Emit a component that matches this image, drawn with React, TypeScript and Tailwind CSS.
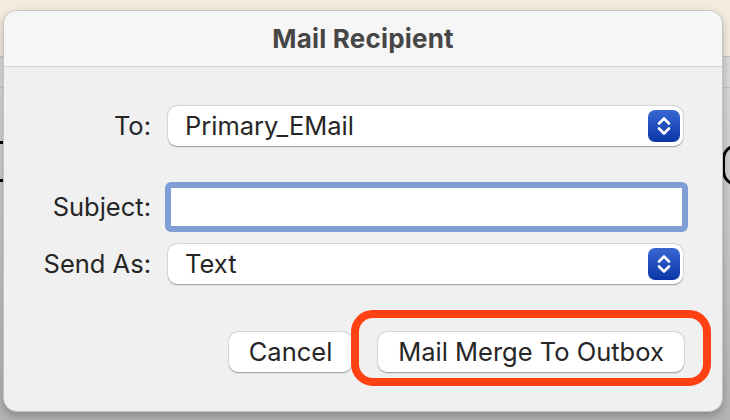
import React from "react";

function Stepper() {
  return (
    <div className="flex h-[32px] w-[32px] items-center justify-center rounded-[7px] bg-gradient-to-b from-[#3868d4] to-[#0a35a8]">
      <svg width="18" height="24" viewBox="0 0 18 24" fill="none">
        <path d="M4 9.5 L9 4.5 L14 9.5" stroke="white" strokeWidth="2.6" strokeLinecap="round" strokeLinejoin="round" />
        <path d="M4 14.5 L9 19.5 L14 14.5" stroke="white" strokeWidth="2.6" strokeLinecap="round" strokeLinejoin="round" />
      </svg>
    </div>
  );
}

function Select({ value }: { value: string }) {
  return (
    <div className="flex h-[40px] w-[515px] items-center justify-between rounded-[9px] bg-white pl-[17px] pr-[3px] shadow-[0_0.5px_1.5px_rgba(0,0,0,0.35),0_0_0_0.5px_rgba(0,0,0,0.08)]">
      <span>{value}</span>
      <Stepper />
    </div>
  );
}

export default function App() {
  return (
    <div
      className="relative h-[420px] w-[730px] overflow-hidden bg-[#d2d2d2] text-[#262626]"
      style={{ fontFamily: "Inter, 'Liberation Sans', sans-serif" }}
    >
      {/* background window content */}
      <div className="flex h-full flex-col">
        <div className="h-[57px] border-b border-[#c9c5bc] bg-[#f4eddf]" />
        <div className="h-[31px] border-b border-[#c4c4c4] bg-[#dadada]" />
        <div className="flex-1 bg-gradient-to-b from-[#d8d8d8] to-[#b4b4b4]" />
      </div>
      <div className="absolute left-[-3px] top-[141px] h-[41px] w-[6px] border-[3px] border-r-0 border-black" />
      <div className="absolute left-[722px] top-[144px] h-[42px] w-[30px] rounded-full border-[3px] border-black" />

      {/* dialog */}
      <div className="absolute left-[3px] top-[10px] flex h-[402px] w-[720px] flex-col overflow-hidden rounded-[14px] border border-[#c4c4c4] bg-[#f0f0f0] shadow-[0_4px_10px_rgba(0,0,0,0.25)]">
        <div className="flex h-[56px] items-center justify-center border-b border-[#d3d3d3] bg-[#f6f6f6]">
          <span className="text-[26px] font-bold tracking-[0.2px] text-[#464646]">Mail Recipient</span>
        </div>
        <div className="flex flex-1 flex-col text-[25.5px]">
          <div className="grid grid-cols-[147px_515px] items-center gap-x-[17px] pt-[39px]">
            <div className="text-right">To:</div>
            <Select value="Primary_EMail" />
          </div>
          <div className="mt-[36px] grid grid-cols-[147px_515px] items-center gap-x-[17px]">
            <div className="text-right">Subject:</div>
            <div className="ml-[-3px] h-[50px] w-[523px] rounded-[6px] border-[6px] border-[#7f9ed6] bg-white" />
          </div>
          <div className="mt-[12px] grid grid-cols-[147px_515px] items-center gap-x-[17px]">
            <div className="text-right">Send As:</div>
            <Select value="Text" />
          </div>
          <div className="mt-[48px] flex justify-end gap-[26px] pr-[38px]">
            <div className="flex h-[40px] w-[123px] items-center justify-center rounded-[9px] bg-white shadow-[0_0.5px_1.5px_rgba(0,0,0,0.35),0_0_0_0.5px_rgba(0,0,0,0.08)]">
              Cancel
            </div>
            <div className="flex h-[40px] w-[306px] items-center justify-center rounded-[9px] bg-white shadow-[0_0.5px_1.5px_rgba(0,0,0,0.35),0_0_0_0.5px_rgba(0,0,0,0.08)]">
              Mail Merge To Outbox
            </div>
          </div>
        </div>
      </div>

      {/* annotation ring */}
      <div className="absolute left-[351px] top-[310px] h-[76px] w-[360px] rounded-[22px] border-[8px] border-[#ff4113]" />
    </div>
  );
}
